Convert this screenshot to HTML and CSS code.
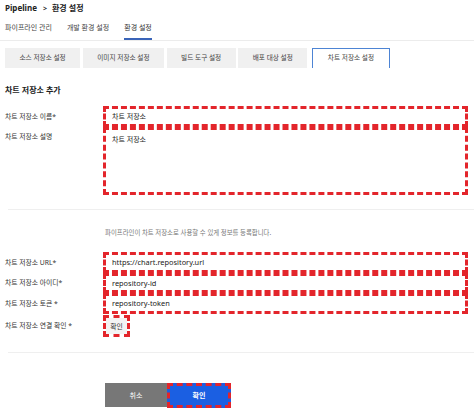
FILE: index.html
```html
<!DOCTYPE html>
<html lang="ko">
<head>
<meta charset="utf-8">
<title>Pipeline - 환경 설정</title>
<link rel="stylesheet" href="styles.css">
</head>
<body>
<div class="page">
  <div class="title">Pipeline<span class="chev">&gt;</span>환경 설정</div>
  <nav class="nav">
    <a class="nav-item">파이프라인 관리</a>
    <a class="nav-item">개발 환경 설정</a>
    <a class="nav-item active">환경 설정</a>
  </nav>
  <div class="tabs">
    <div class="tab">소스 저장소 설정</div>
    <div class="tab">이미지 저장소 설정</div>
    <div class="tab">빌드 도구 설정</div>
    <div class="tab">배포 대상 설정</div>
    <div class="tab active">차트 저장소 설정</div>
  </div>
  <h2 class="heading">차트 저장소 추가</h2>
  <div class="section first">
    <div class="row">
      <div class="label">차트 저장소 이름*</div>
      <input class="field" value="차트 저장소">
    </div>
    <div class="row">
      <div class="label">차트 저장소 설명</div>
      <textarea class="field area">차트 저장소</textarea>
    </div>
  </div>
  <div class="sep"></div>
  <div class="help">파이프라인이 차트 저장소로 사용할 수 있게 정보를 등록합니다.</div>
  <div class="section">
    <div class="row">
      <div class="label">차트 저장소 URL*</div>
      <input class="field latin" value="https://chart.repository.url">
    </div>
    <div class="row">
      <div class="label">차트 저장소 아이디*</div>
      <input class="field latin" value="repository-id">
    </div>
    <div class="row">
      <div class="label">차트 저장소 토큰 *</div>
      <input class="field latin" value="repository-token">
    </div>
    <div class="row check-row">
      <div class="label">차트 저장소 연결 확인 *</div>
      <div class="check-box"><button class="check-btn">확인</button></div>
    </div>
  </div>
  <div class="sep sep2"></div>
  <div class="actions">
    <button class="btn cancel">취소</button>
    <button class="btn ok">확인</button>
  </div>
</div>
</body>
</html>
```

FILE: styles.css
```css
* { box-sizing: border-box; }
body {
  margin: 0;
  background: #ffffff;
  font-family: "Noto Sans", "Noto Sans CJK KR", sans-serif;
  color: #333;
}
.page {
  padding: 0 6px 0 5px;
}
.title {
  font-size: 8px;
  font-weight: 700;
  line-height: 16px;
  color: #222;
}
.chev {
  display: inline-block;
  margin: 0 5px 0 6px;
  font-size: 7px;
}
.nav {
  display: flex;
  gap: 15px;
  margin-left: -5px;
  margin-right: -6px;
  padding-left: 5px;
  border-bottom: 1px solid #ececec;
  height: 24px;
}
.nav-item {
  font-size: 7px;
  line-height: 10px;
  padding-top: 6px;
  height: 23px;
  color: #444;
  border-bottom: 2px solid transparent;
}
.nav-item.active {
  border-bottom-color: #3a64b8;
  color: #333;
}
.tabs {
  display: flex;
  gap: 2.5px;
  margin-top: 7px;
}
.tab {
  height: 19.5px;
  padding: 0 14.5px;
  font-size: 6.65px;
  line-height: 19.5px;
  background: #f0f0f0;
  color: #444;
  white-space: nowrap;
}
.tab.active {
  background: #fff;
  border: 1.5px solid #4d84d4;
  border-bottom: none;
  line-height: 18px;
  margin-left: 2.5px;
}
.heading {
  margin: 16px 0 0;
  font-size: 8px;
  font-weight: 700;
  line-height: 12px;
  color: #222;
}
.section.first {
  margin-top: 10.5px;
}
.row {
  display: flex;
  align-items: flex-start;
}
.label {
  width: 98px;
  flex: none;
  font-size: 6.8px;
  line-height: 10px;
  padding-top: 5.5px;
  color: #333;
  white-space: nowrap;
}
.field {
  flex: 1;
  min-width: 0;
  height: 20.5px;
  margin: 0;
  padding: 0 6px;
  border: 3px dashed #e3252b;
  background: #fff;
  font-family: "Noto Sans", "Noto Sans CJK KR", sans-serif;
  font-size: 7px;
  color: #222;
  outline: none;
}
.field.latin {
  font-size: 7.4px;
}
.area {
  height: 68px;
  padding: 5px 6px;
  line-height: 10px;
  resize: none;
  overflow: hidden;
  display: block;
}
.sep {
  height: 1px;
  background: #efefef;
  margin: 14px -6px 0 3px;
}
.help {
  margin: 18px 0 0 100px;
  font-size: 6.4px;
  line-height: 10px;
  color: #777;
}
.section {
  margin-top: 14.5px;
}
.check-row .label {
  padding-top: 7px;
}
.check-box {
  margin-top: 1px;
  width: 27px;
  height: 22px;
  border: 3px dashed #e3252b;
  padding: 0;
}
.check-btn {
  display: block;
  width: 100%;
  height: 100%;
  border: none;
  margin: 0;
  padding: 0;
  background: #f3f3f3;
  font-family: "Noto Sans", "Noto Sans CJK KR", sans-serif;
  font-size: 6.8px;
  color: #333;
}
.sep2 {
  margin-top: 15px;
}
.actions {
  display: flex;
  margin: 30px 0 0 100px;
}
.btn {
  height: 25px;
  border: none;
  margin: 0;
  padding: 0;
  font-family: "Noto Sans", "Noto Sans CJK KR", sans-serif;
  font-size: 7px;
  color: #fff;
}
.cancel {
  width: 62px;
  background: #777777;
  height: 24px;
}
.ok {
  width: 64px;
  background: #1b5fe2;
  border: 3px dashed #e3252b;
  font-weight: 700;
}
```
